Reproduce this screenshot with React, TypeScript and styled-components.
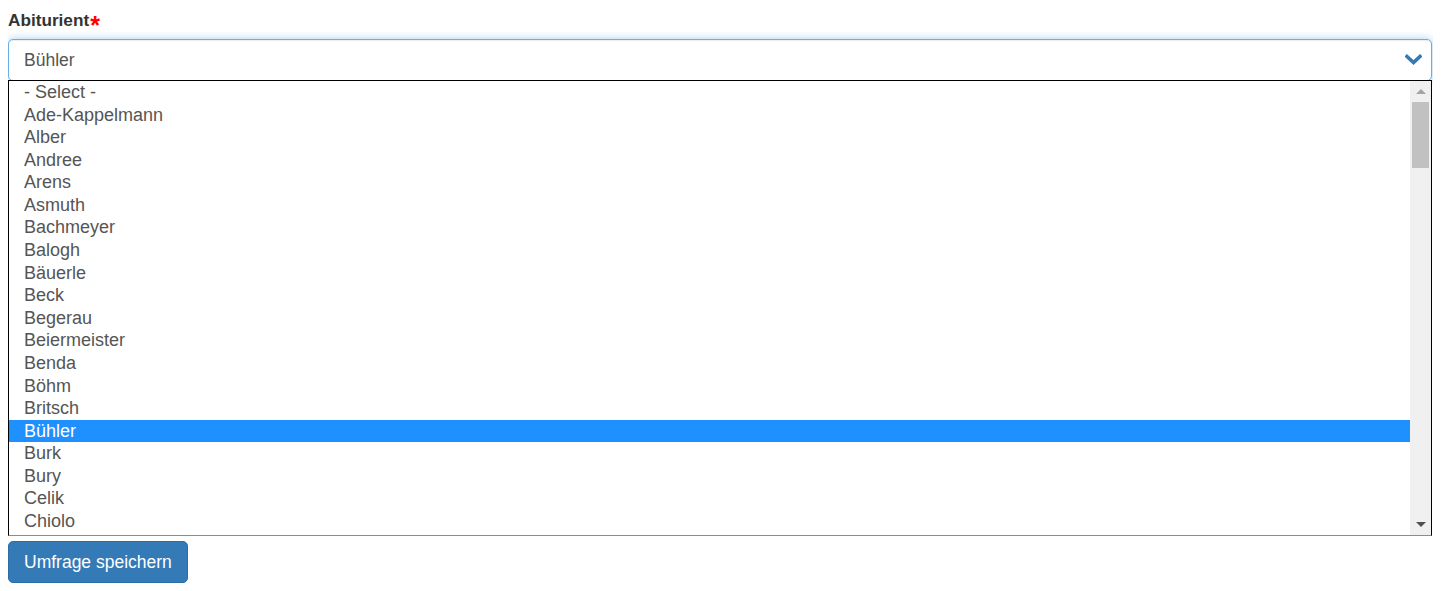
import React from "react";
import styled, { createGlobalStyle } from "styled-components";

const GlobalStyle = createGlobalStyle`
  body {
    margin: 8px;
    font-family: "Liberation Sans", Arial, Helvetica, sans-serif;
    font-size: 17.5px;
    color: #333;
    background: #fff;
  }
`;

const FormItem = styled.div`
  display: flex;
  flex-direction: column;
  width: 1424px;
`;

const Label = styled.label`
  display: block;
  font-weight: bold;
  font-size: 17.2px;
  line-height: 25px;
  margin-bottom: 6px;
  color: #333;
`;

const Required = styled.span`
  color: #f00;
  font-size: 25px;
  line-height: 0;
  position: relative;
  top: 8px;
  margin-left: 1px;
`;

const Field = styled.div`
  box-sizing: border-box;
  height: 42px;
  display: flex;
  align-items: center;
  justify-content: space-between;
  padding: 0 9px 0 15px;
  border: 1px solid #66afe9;
  border-radius: 5px;
  color: #555;
  line-height: 22px;
  box-shadow: inset 0 1px 1px rgba(0, 0, 0, 0.075),
    0 0 8px rgba(102, 175, 233, 0.6);
  background: #fff;
`;

const ListBox = styled.div`
  box-sizing: border-box;
  height: 456px;
  display: flex;
  border: 1px solid #000;
  border-bottom-color: #7a8db3;
  background: #fff;
  margin-top: -1px;
`;

const Options = styled.ul`
  flex: 1;
  list-style: none;
  margin: 0;
  padding: 0;
  overflow: hidden;
`;

const Option = styled.li<{ $selected?: boolean }>`
  height: 22.58px;
  line-height: 22.58px;
  padding-left: 15px;
  font-size: 18px;
  color: ${(p) => (p.$selected ? "#fff" : "#555")};
  background: ${(p) => (p.$selected ? "#1e90ff" : "transparent")};
  white-space: nowrap;
`;

const ScrollTrack = styled.div`
  width: 21px;
  background: #f0f0f0;
  display: flex;
  flex-direction: column;
  align-items: center;
`;

const ScrollArrow = styled.div<{ $up?: boolean; $dim?: boolean }>`
  width: 21px;
  height: 21px;
  display: flex;
  align-items: center;
  justify-content: center;
  &::before {
    content: "";
    border-left: 5px solid transparent;
    border-right: 5px solid transparent;
    ${(p) =>
      p.$up
        ? `border-bottom: 5px solid ${p.$dim ? "#a3a3a3" : "#505050"};`
        : `border-top: 5px solid ${p.$dim ? "#a3a3a3" : "#505050"};`}
  }
`;

const Thumb = styled.div`
  width: 17px;
  height: 66px;
  background: #c1c1c1;
`;

const Spacer = styled.div`
  flex: 1;
`;

const SaveButton = styled.button`
  align-self: flex-start;
  margin-top: 5px;
  box-sizing: border-box;
  height: 42px;
  padding: 0 15px;
  font-family: inherit;
  font-size: 17.5px;
  color: #fff;
  background: #337ab7;
  border: 1px solid #2e6da4;
  border-radius: 5px;
  cursor: pointer;
`;

const names = [
  "- Select -",
  "Ade-Kappelmann",
  "Alber",
  "Andree",
  "Arens",
  "Asmuth",
  "Bachmeyer",
  "Balogh",
  "Bäuerle",
  "Beck",
  "Begerau",
  "Beiermeister",
  "Benda",
  "Böhm",
  "Britsch",
  "Bühler",
  "Burk",
  "Bury",
  "Celik",
  "Chiolo",
];

const Chevron = () => (
  <svg width="17" height="12" viewBox="0 0 17 12">
    <polyline
      points="2,2.5 8.5,8.5 15,2.5"
      fill="none"
      stroke="#337ab7"
      strokeWidth="3.6"
      strokeLinecap="square"
    />
  </svg>
);

export default function App() {
  const selected = "Bühler";
  return (
    <>
      <GlobalStyle />
      <FormItem>
        <Label>
          Abiturient<Required>*</Required>
        </Label>
        <Field>
          <span>{selected}</span>
          <Chevron />
        </Field>
        <ListBox>
          <Options>
            {names.map((n) => (
              <Option key={n} $selected={n === selected}>
                {n}
              </Option>
            ))}
          </Options>
          <ScrollTrack>
            <ScrollArrow $up $dim />
            <Thumb />
            <Spacer />
            <ScrollArrow />
          </ScrollTrack>
        </ListBox>
        <SaveButton>Umfrage speichern</SaveButton>
      </FormItem>
    </>
  );
}
